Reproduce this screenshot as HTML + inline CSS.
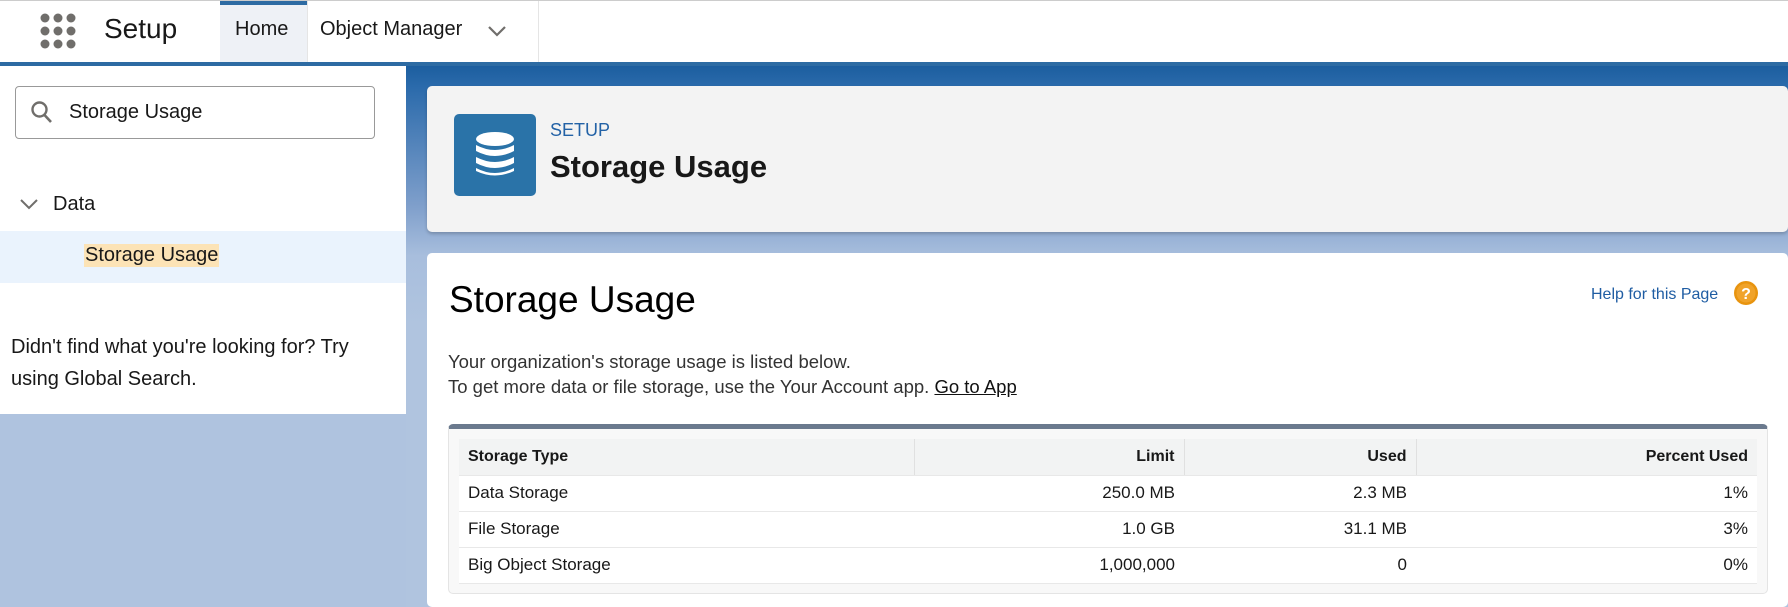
<!DOCTYPE html>
<html><head><meta charset="utf-8"><style>
*{margin:0;padding:0;box-sizing:border-box}
body{width:1788px;height:607px;overflow:hidden;font-family:"Liberation Sans",sans-serif;background:#afc3df;position:relative;color:#181818}
.abs{position:absolute}
#nav{left:0;top:0;width:1788px;height:62px;background:#fff;border-top:1px solid #ccc}
#bar{left:0;top:62px;width:1788px;height:4px;background:#2d6ba3}
#bg{left:406px;top:66px;width:1382px;height:541px;background:linear-gradient(#1c5e9f 0px,#2a6aab 20px,#7f9fcb 140px,#a8bedd 190px,#b0c4df 260px)}
#side{left:0;top:66px;width:406px;height:348px;background:#fff}
.card{background:#f3f3f3;border-radius:5px;box-shadow:0 2px 3px rgba(0,0,0,.2)}
table{border-collapse:collapse;font-size:17px}
td,th{height:36px;padding:0 9px;border-bottom:1px solid #e8e8e8}
th{background:#f2f3f3;font-weight:bold;border-right:1px solid #e0e0e0;font-size:16px}
th:last-child{border-right:none}
.r{text-align:right}
</style></head><body>
<div id="nav" class="abs"></div>
<div class="abs" style="left:40px;top:13px;width:36px;height:36px">
<svg width="36" height="36"><g fill="#706e6b"><circle cx="5" cy="5" r="4.5"/><circle cx="18" cy="5" r="4.5"/><circle cx="31" cy="5" r="4.5"/><circle cx="5" cy="18" r="4.5"/><circle cx="18" cy="18" r="4.5"/><circle cx="31" cy="18" r="4.5"/><circle cx="5" cy="31" r="4.5"/><circle cx="18" cy="31" r="4.5"/><circle cx="31" cy="31" r="4.5"/></g></svg></div>
<div class="abs" style="left:104px;top:13px;font-size:28px;color:#181818">Setup</div>
<div class="abs" style="left:220px;top:1px;width:87px;height:61px;background:#eef1f6;border-top:4px solid #2d6ba3"></div>
<div class="abs" style="left:235px;top:18px;font-size:20px">Home</div>
<div class="abs" style="left:307px;top:1px;width:1px;height:61px;background:#e5e5e5"></div>
<div class="abs" style="left:538px;top:1px;width:1px;height:61px;background:#e5e5e5"></div>
<div class="abs" style="left:320px;top:18px;font-size:20px">Object Manager</div>
<svg class="abs" style="left:487px;top:24px" width="20" height="14"><path d="M2 3 L10 11 L18 3" fill="none" stroke="#706e6b" stroke-width="2.2"/></svg>
<div id="bar" class="abs"></div>
<div id="bg" class="abs"></div>
<div id="side" class="abs"></div>
<div class="abs" style="left:15px;top:86px;width:360px;height:53px;border:1px solid #999;border-radius:4px;background:#fff"></div>
<svg class="abs" style="left:30px;top:100px" width="24" height="26"><circle cx="9.5" cy="9.5" r="7" fill="none" stroke="#706e6b" stroke-width="2.4"/><path d="M14.5 15 L21 22" stroke="#706e6b" stroke-width="2.6"/></svg>
<div class="abs" style="left:69px;top:101px;font-size:20px">Storage Usage</div>
<svg class="abs" style="left:19px;top:198px" width="20" height="14"><path d="M2 2 L10 10 L18 2" fill="none" stroke="#706e6b" stroke-width="2"/></svg>
<div class="abs" style="left:53px;top:193px;font-size:20px">Data</div>
<div class="abs" style="left:0;top:231px;width:406px;height:52px;background:#eaf3fd"></div>
<div class="abs" style="left:84px;top:244px;font-size:20px;background:#fce3b6;padding:0 1px">Storage Usage</div>
<div class="abs" style="left:11px;top:331px;font-size:20px;line-height:32px">Didn't find what you're looking for? Try<br>using Global Search.</div>

<div class="abs card" style="left:427px;top:86px;width:1361px;height:146px"></div>
<div class="abs" style="left:454px;top:114px;width:82px;height:82px;background:#2a73a8;border-radius:5px"></div>
<svg class="abs" style="left:473px;top:131px" width="44" height="48"><g fill="#fff"><ellipse cx="22" cy="8" rx="19" ry="7"/><path d="M3 14 Q22 24 41 14 V20 Q22 30 3 20Z"/><path d="M3 26 Q22 36 41 26 V32 Q22 42 3 32Z"/><path d="M3 37 Q22 47 41 37 V40 Q22 49 3 40Z"/></g></svg>
<div class="abs" style="left:550px;top:120px;font-size:18px;color:#2362a6">SETUP</div>
<div class="abs" style="left:550px;top:149px;font-size:31px;font-weight:bold">Storage Usage</div>

<div class="abs" style="left:427px;top:253px;width:1361px;height:354px;background:#fff;border-radius:5px"></div>
<div class="abs" style="left:449px;top:279px;font-size:37px;color:#000">Storage Usage</div>
<div class="abs" style="left:1591px;top:286px;font-size:16px;color:#1f5da3">Help for this Page</div>
<svg class="abs" style="left:1733px;top:280px" width="26" height="26"><circle cx="13" cy="13" r="12" fill="#e8940f"/><circle cx="13" cy="13" r="9.5" fill="#f0a32a"/><text x="13" y="19" font-size="16" font-weight="bold" fill="#fff" text-anchor="middle" font-family="Liberation Sans">?</text></svg>
<div class="abs" style="left:448px;top:349px;font-size:18.5px;line-height:25px;color:#333">Your organization's storage usage is listed below.<br>To get more data or file storage, use the Your Account app. <u style="color:#111">Go to App</u></div>

<div class="abs" style="left:448px;top:424px;width:1320px;height:170px;background:#f8f8f8;border-top:5px solid #6b7a8e;border-radius:5px;border-left:1px solid #e4e4e4;border-right:1px solid #e4e4e4;border-bottom:1px solid #e4e4e4"></div>
<table class="abs" style="left:459px;top:439px;width:1298px;background:#fff">
<tr><th style="width:455px;text-align:left">Storage Type</th><th class="r" style="width:270px">Limit</th><th class="r" style="width:232px">Used</th><th class="r">Percent Used</th></tr>
<tr><td>Data Storage</td><td class="r">250.0 MB</td><td class="r">2.3 MB</td><td class="r">1%</td></tr>
<tr><td>File Storage</td><td class="r">1.0 GB</td><td class="r">31.1 MB</td><td class="r">3%</td></tr>
<tr><td>Big Object Storage</td><td class="r">1,000,000</td><td class="r">0</td><td class="r">0%</td></tr>
</table>
</body></html>
